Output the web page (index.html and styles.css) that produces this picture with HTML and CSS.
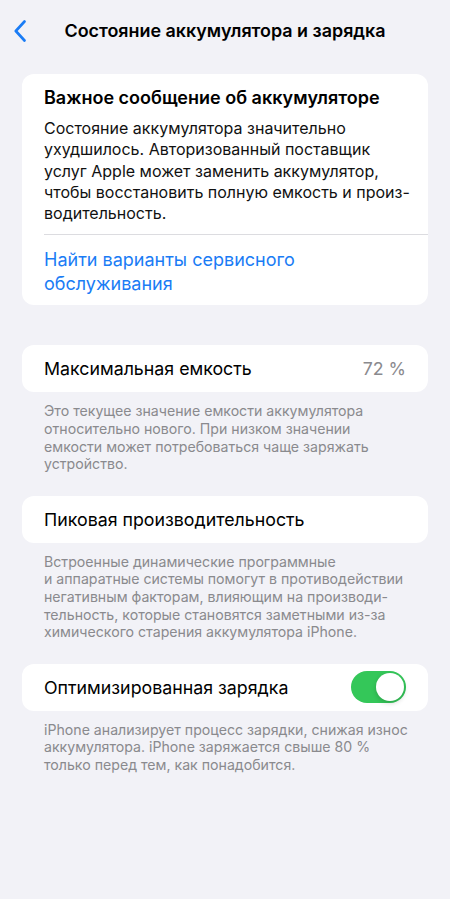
FILE: index.html
```html
<!DOCTYPE html>
<html lang="ru">
<head>
<meta charset="utf-8">
<link rel="stylesheet" href="styles.css">
</head>
<body>
<div class="screen">
  <header class="nav">
    <svg class="back" width="14" height="22" viewBox="0 0 14 22"><path d="M11.5 1.5 L2.8 11 L11.5 20.5" fill="none" stroke="#1a7cf5" stroke-width="2.6" stroke-linecap="round" stroke-linejoin="round"/></svg>
    <h1 class="nav-title">Состояние аккумулятора и зарядка</h1>
  </header>

  <section class="card msg">
    <h2 class="msg-title">Важное сообщение об аккумуляторе</h2>
    <p class="msg-body">Состояние аккумулятора значительно<br>ухудшилось. Авторизованный поставщик<br>услуг Apple может заменить аккумулятор,<br>чтобы восстановить полную емкость и произ-<br>водительность.</p>
    <div class="divider"></div>
    <a class="msg-link">Найти варианты сервисного<br>обслуживания</a>
  </section>

  <section class="card row">
    <span class="row-label">Максимальная емкость</span>
    <span class="row-value">72 %</span>
  </section>
  <p class="footer">Это текущее значение емкости аккумулятора<br>относительно нового. При низком значении<br>емкости может потребоваться чаще заряжать<br>устройство.</p>

  <section class="card row">
    <span class="row-label">Пиковая производительность</span>
  </section>
  <p class="footer">Встроенные динамические программные<br>и аппаратные системы помогут в противодействии<br>негативным факторам, влияющим на производи-<br>тельность, которые становятся заметными из-за<br>химического старения аккумулятора iPhone.</p>

  <section class="card row">
    <span class="row-label">Оптимизированная зарядка</span>
    <span class="switch"><span class="knob"></span></span>
  </section>
  <p class="footer">iPhone анализирует процесс зарядки, снижая износ<br>аккумулятора. iPhone заряжается свыше 80 %<br>только перед тем, как понадобится.</p>
</div>
</body>
</html>
```

FILE: styles.css
```css
* { box-sizing: border-box; margin: 0; padding: 0; }
html, body { background: #f2f2f7; }
body {
  width: 450px;
  height: 899px;
  font-family: Inter, "Noto Sans", sans-serif;
  color: #000;
  -webkit-font-smoothing: antialiased;
}
.screen { padding: 0 22px; }
.nav {
  position: relative;
  height: 62px;
  display: flex;
  align-items: center;
  justify-content: center;
  margin: 0 -22px 12px;
}
.back { position: absolute; left: 13px; top: 20px; }
.nav-title {
  font-size: 17.9px;
  font-weight: 600;
  line-height: 24px;
  white-space: nowrap;
}
.card {
  background: #fff;
  border-radius: 12px;
}
.msg { padding: 12px 0 9px 22px; }
.msg-title {
  font-size: 18px;
  font-weight: 600;
  line-height: 24px;
  margin-bottom: 8px;
  white-space: nowrap;
}
.msg-body {
  font-size: 16px;
  line-height: 21.3px;
  color: #111;
  white-space: nowrap;
}
.divider {
  height: 1px;
  background: #dcdce0;
  margin: 10px 0 13px;
}
.msg-link {
  display: block;
  color: #1a7cf5;
  font-size: 18px;
  line-height: 24px;
  white-space: nowrap;
}
.row {
  height: 47px;
  display: flex;
  align-items: center;
  justify-content: space-between;
  padding: 0 22px;
}
.msg + .row { margin-top: 40px; }
.footer + .row { margin-top: 23px; }
.row-label {
  font-size: 17.8px;
}
.row-value {
  font-size: 17.8px;
  color: #8a8a8e;
}
.footer {
  margin-top: 10px;
  padding: 0 22px;
  font-size: 14.15px;
  line-height: 17.6px;
  color: #8a8a8e;
  white-space: nowrap;
}
.switch {
  width: 55px;
  height: 32px;
  border-radius: 16px;
  background: #34c759;
  display: flex;
  align-items: center;
  justify-content: flex-end;
  padding: 2px;
}
.knob {
  width: 28px;
  height: 28px;
  border-radius: 50%;
  background: #fff;
  box-shadow: 0 2px 5px rgba(0,0,0,0.18);
}
```
